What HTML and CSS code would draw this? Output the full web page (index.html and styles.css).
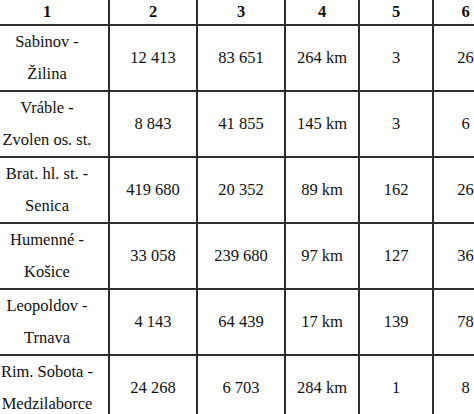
FILE: index.html
```html
<!DOCTYPE html>
<html lang="sk">
<head>
<meta charset="utf-8">
<title>Tabuľka</title>
<link rel="stylesheet" href="styles.css">
</head>
<body>
<div class="frame">
  <div class="table">
    <div class="cell head">1</div>
    <div class="cell head">2</div>
    <div class="cell head">3</div>
    <div class="cell head">4</div>
    <div class="cell head">5</div>
    <div class="cell head">6</div>

    <div class="cell">Sabinov -<br>Žilina</div>
    <div class="cell">12 413</div>
    <div class="cell">83 651</div>
    <div class="cell">264 km</div>
    <div class="cell">3</div>
    <div class="cell">26</div>

    <div class="cell">Vráble -<br>Zvolen os. st.</div>
    <div class="cell">8 843</div>
    <div class="cell">41 855</div>
    <div class="cell">145 km</div>
    <div class="cell">3</div>
    <div class="cell">6</div>

    <div class="cell">Brat. hl. st. -<br>Senica</div>
    <div class="cell">419 680</div>
    <div class="cell">20 352</div>
    <div class="cell">89 km</div>
    <div class="cell">162</div>
    <div class="cell">26</div>

    <div class="cell">Humenné -<br>Košice</div>
    <div class="cell">33 058</div>
    <div class="cell">239 680</div>
    <div class="cell">97 km</div>
    <div class="cell">127</div>
    <div class="cell">36</div>

    <div class="cell">Leopoldov -<br>Trnava</div>
    <div class="cell">4 143</div>
    <div class="cell">64 439</div>
    <div class="cell">17 km</div>
    <div class="cell">139</div>
    <div class="cell">78</div>

    <div class="cell">Rim. Sobota -<br>Medzilaborce</div>
    <div class="cell">24 268</div>
    <div class="cell">6 703</div>
    <div class="cell">284 km</div>
    <div class="cell">1</div>
    <div class="cell">8</div>
  </div>
</div>
</body>
</html>
```

FILE: styles.css
```css
html, body {
  margin: 0;
  padding: 0;
  background: #ffffff;
}

body {
  font-family: "Liberation Serif", "Times New Roman", serif;
  font-size: 16.5px;
  color: #111111;
}

.frame {
  width: 474px;
  height: 414px;
  overflow: hidden;
}

.table {
  display: inline-grid;
  margin: -3px 0 0 -16px;
  grid-template-columns: 122px 86px 86px 72px 72px 63px;
  grid-template-rows: 25px repeat(6, 64px);
  gap: 2px;
  padding: 2px;
  background: #2e2e2e;
}

.cell {
  background: #ffffff;
  display: flex;
  align-items: center;
  justify-content: center;
  text-align: center;
  line-height: 32px;
  white-space: nowrap;
}

.head {
  font-weight: bold;
  line-height: 25px;
}
```
